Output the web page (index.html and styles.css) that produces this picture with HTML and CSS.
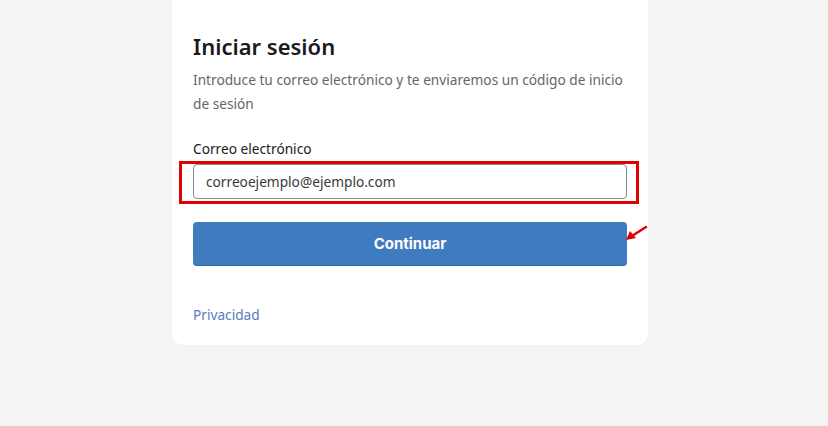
FILE: index.html
```html
<!DOCTYPE html>
<html lang="es">
<head>
<meta charset="utf-8">
<link rel="stylesheet" href="styles.css">
</head>
<body>
<main class="card">
  <h1 class="title">Iniciar sesión</h1>
  <p class="desc">Introduce tu correo electrónico y te enviaremos un código de inicio de sesión</p>
  <label class="label" for="email">Correo electrónico</label>
  <div class="highlight">
    <input id="email" class="input" type="text" value="correoejemplo@ejemplo.com">
  </div>
  <div class="btn-wrap">
    <button class="btn">Continuar</button>
    <svg class="arrow" width="24" height="18" viewBox="0 0 24 18"><line x1="22" y1="2" x2="8" y2="11" stroke="#e00000" stroke-width="2.5" stroke-linecap="round"/><polygon points="2,15 6,6 12,13" fill="#e00000"/></svg>
  </div>
  <a class="link" href="#">Privacidad</a>
</main>
</body>
</html>
```
FILE: styles.css
```css
html, body { margin: 0; padding: 0; }
body {
  background: #f4f4f4;
  width: 828px;
  height: 426px;
  overflow: hidden;
  font-family: "Noto Sans", "Open Sans", sans-serif;
}
.card {
  margin-left: 172px;
  width: 476px;
  box-sizing: border-box;
  background: #fff;
  border-radius: 0 0 12px 12px;
  padding: 30px 21px 20px 21px;
  display: flex;
  flex-direction: column;
  align-items: flex-start;
}
.title {
  margin: 0;
  font-size: 22px;
  font-weight: 600;
  color: #1b1b1b;
  line-height: 32px;
}
.desc {
  margin: 6px 0 0 0;
  font-size: 13.7px;
  line-height: 24px;
  color: #666;
  width: 434px;
}
.label {
  margin-top: 23px;
  font-size: 13.7px;
  line-height: 20px;
  color: #1b1b1b;
}
.highlight {
  margin: 2px 0 0 -14px;
  border: 3px solid #e00000;
  padding: 0 9px 2px 11px;
  width: 460px;
  box-sizing: border-box;
}
.input {
  display: block;
  width: 434px;
  height: 35px;
  box-sizing: border-box;
  border: 1px solid #8a8a8a;
  border-radius: 4px;
  padding: 0 12px;
  font-family: inherit;
  font-size: 13.7px;
  color: #3a3a3a;
  background: #fff;
  margin: 0;
}
.btn-wrap {
  position: relative;
  margin-top: 18px;
}
.btn {
  display: block;
  width: 434px;
  height: 44px;
  border: none;
  border-bottom: 1px solid #2f68a8;
  border-radius: 4px;
  background: #3f7bbf;
  color: #fff;
  font-family: Inter, "Noto Sans", sans-serif;
  font-size: 15px;
  font-weight: 700;
}
.arrow {
  position: absolute;
  left: 431px;
  top: 3px;
}
.link {
  margin-top: 39px;
  font-size: 13.7px;
  line-height: 20px;
  color: #5a7dbb;
  text-decoration: none;
}
```
